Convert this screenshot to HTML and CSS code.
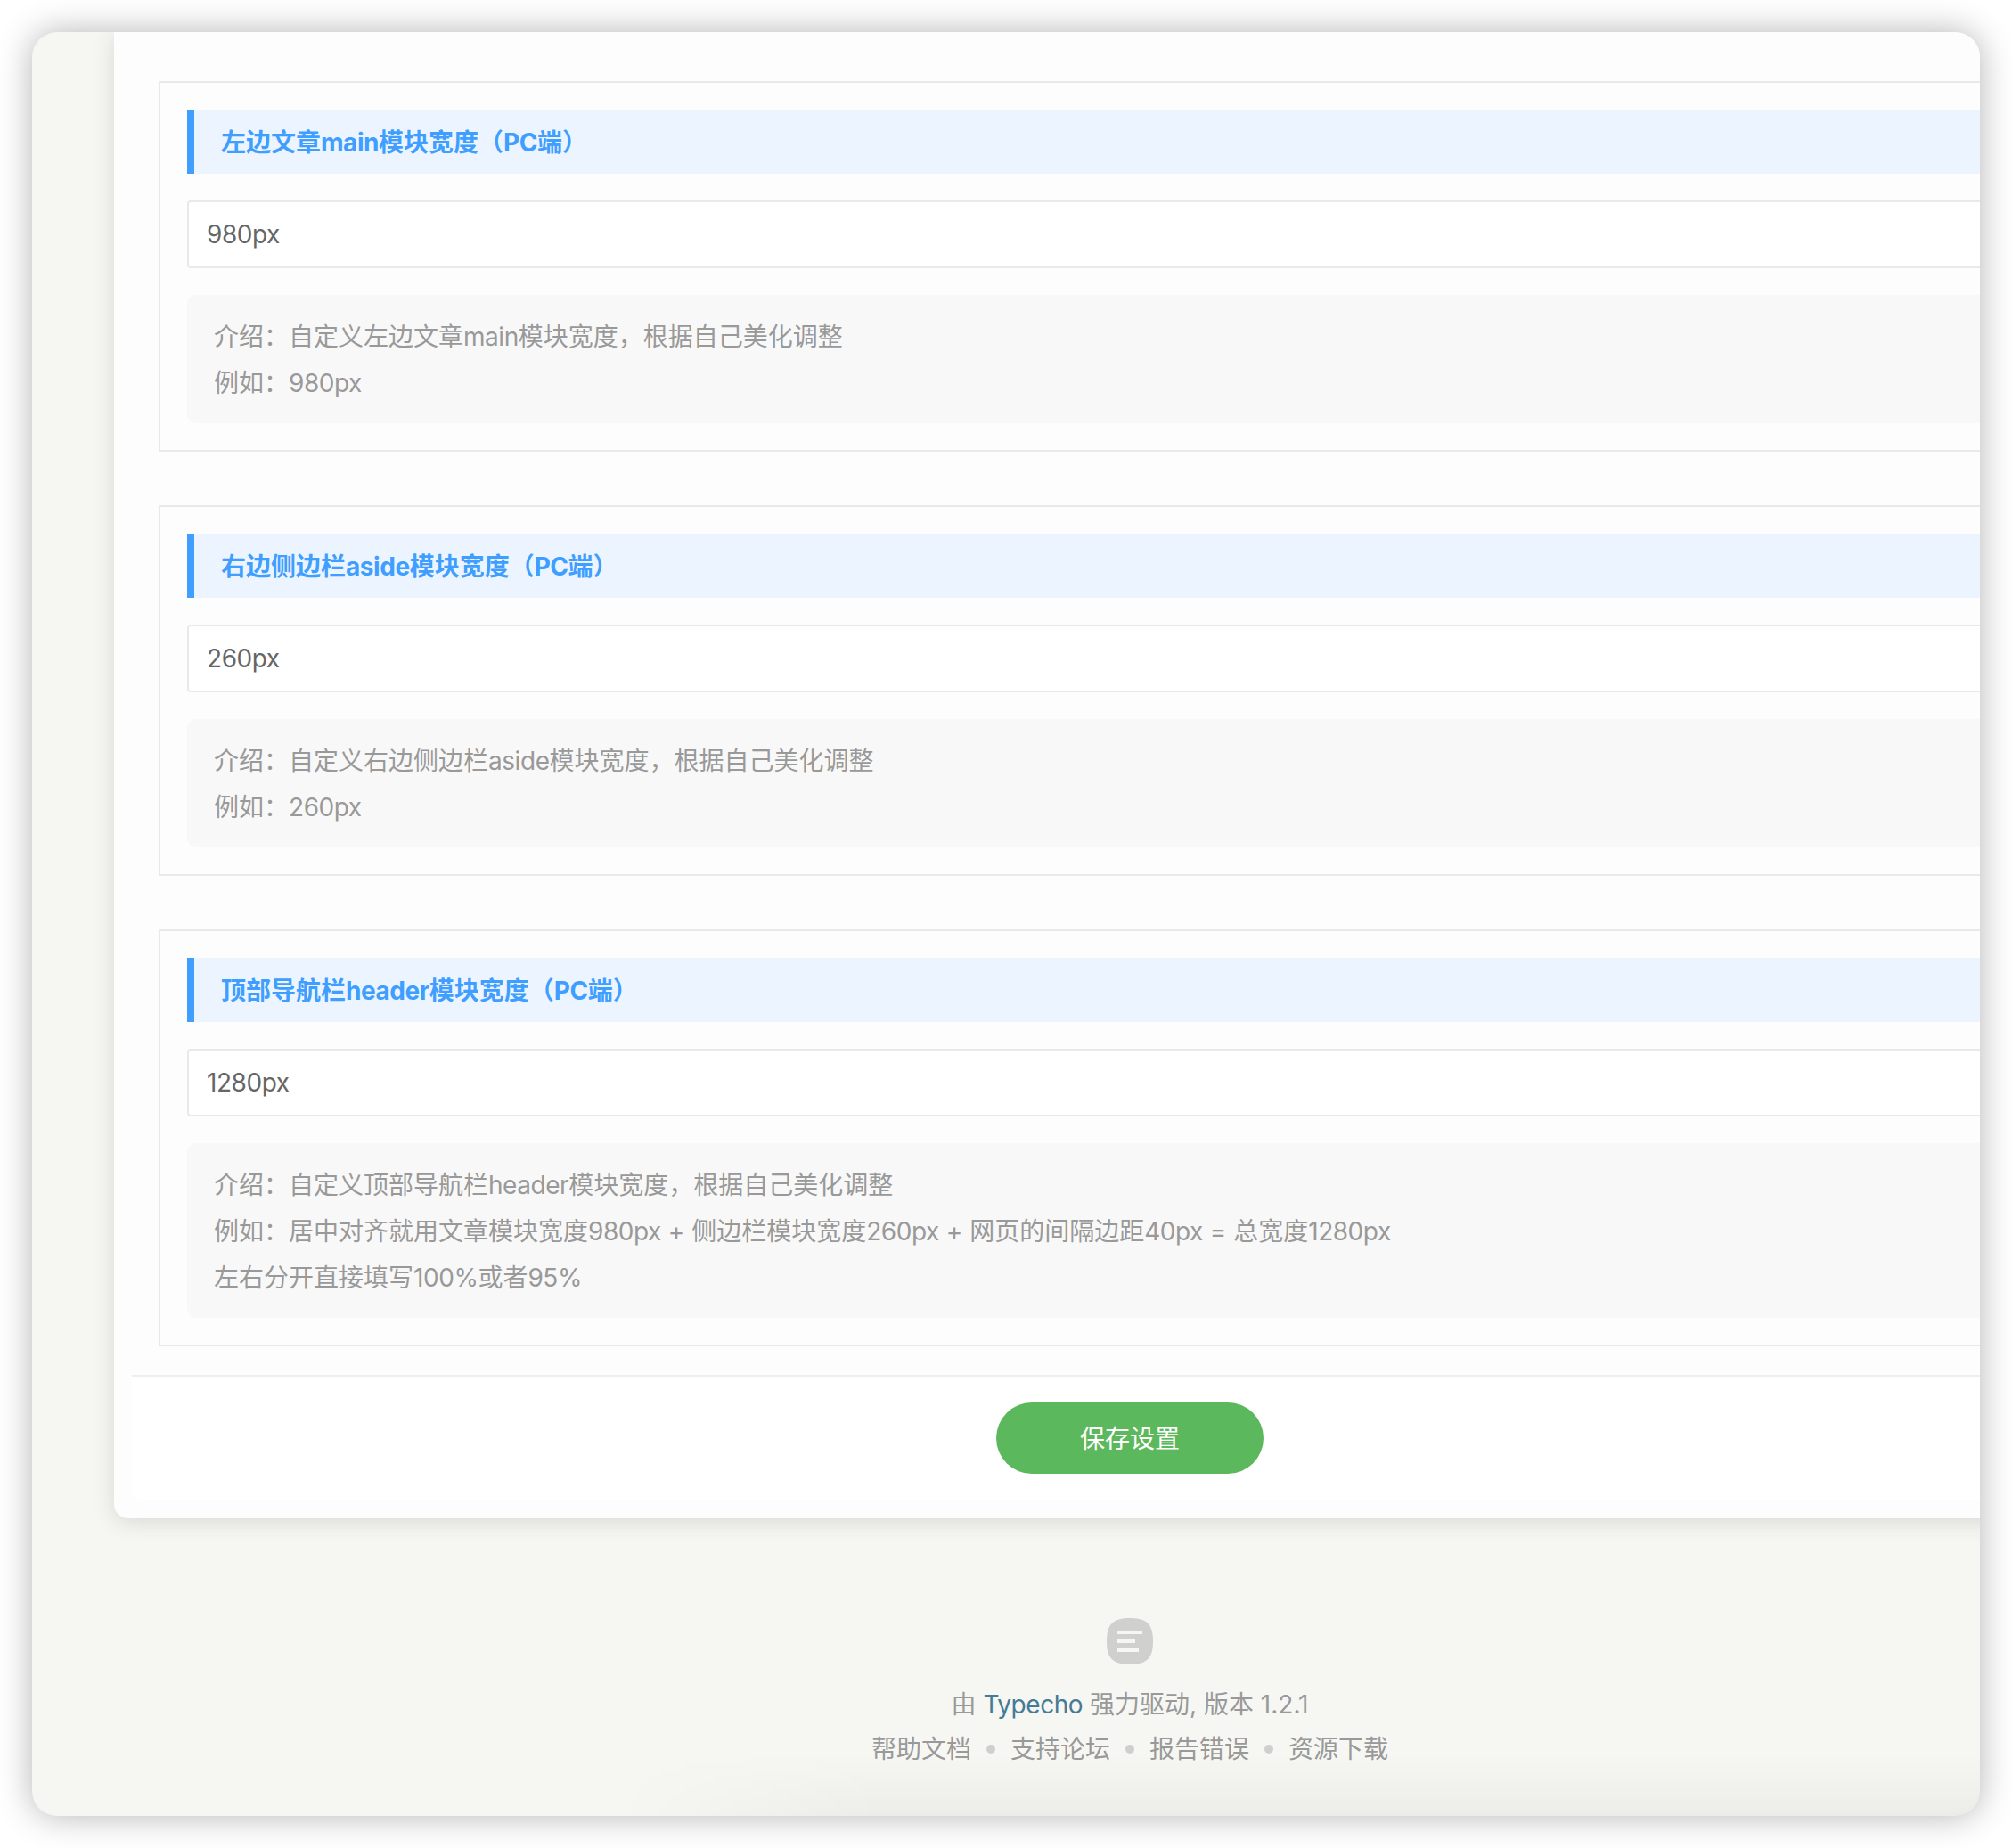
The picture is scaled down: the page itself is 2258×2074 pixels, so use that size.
FILE: index.html
```html
<!DOCTYPE html>
<html lang="zh-CN">
<head>
<meta charset="utf-8">
<title>设置</title>
<link rel="stylesheet" href="styles.css">
</head>
<body>
<div class="window">
  <div class="canvas">
    <form class="card">
      <section class="option">
        <h3 class="option-title">左边文章<span class="en">main</span>模块宽度（<span class="en">PC</span>端）</h3>
        <input class="field" type="text" value="980px">
        <div class="desc">
          <p>介绍：自定义左边文章<span class="en">main</span>模块宽度，根据自己美化调整</p>
          <p>例如：<span class="en">980px</span></p>
        </div>
      </section>
      <section class="option">
        <h3 class="option-title">右边侧边栏<span class="en">aside</span>模块宽度（<span class="en">PC</span>端）</h3>
        <input class="field" type="text" value="260px">
        <div class="desc">
          <p>介绍：自定义右边侧边栏<span class="en">aside</span>模块宽度，根据自己美化调整</p>
          <p>例如：<span class="en">260px</span></p>
        </div>
      </section>
      <section class="option">
        <h3 class="option-title">顶部导航栏<span class="en">header</span>模块宽度（<span class="en">PC</span>端）</h3>
        <input class="field" type="text" value="1280px">
        <div class="desc">
          <p>介绍：自定义顶部导航栏<span class="en">header</span>模块宽度，根据自己美化调整</p>
          <p>例如：居中对齐就用文章模块宽度<span class="en">980px</span> + 侧边栏模块宽度<span class="en">260px</span> + 网页的间隔边距<span class="en">40px</span> = 总宽度<span class="en">1280px</span></p>
          <p>左右分开直接填写<span class="en">100%</span>或者<span class="en">95%</span></p>
        </div>
      </section>
      <div class="actions">
        <button class="save" type="button">保存设置</button>
      </div>
    </form>
    <footer class="foot">
      <svg class="logo" viewBox="0 0 52 52" aria-hidden="true">
        <path class="logo-shape" d="M26 0C45 0 52 7 52 26S45 52 26 52 0 45 0 26 7 0 26 0Z"/>
        <rect class="logo-bar" x="12" y="14" width="28" height="4"/>
        <rect class="logo-bar" x="12" y="24" width="20" height="4"/>
        <rect class="logo-bar" x="12" y="34" width="24" height="4"/>
      </svg>
      <p class="foot-line">由 <a class="brand en" href="#">Typecho</a> 强力驱动, 版本 1.2.1</p>
      <nav class="foot-nav">
        <a href="#">帮助文档</a><span class="dot"></span><a href="#">支持论坛</a><span class="dot"></span><a href="#">报告错误</a><span class="dot"></span><a href="#">资源下载</a>
      </nav>
    </footer>
  </div>
</div>
</body>
</html>
```
FILE: styles.css
```css
* { box-sizing: border-box; }
html, body { margin: 0; padding: 0; background: #fff; }
body {
  padding: 36px;
  height: 2074px;
  overflow: hidden;
  font-family: Inter, "Noto Sans CJK SC", sans-serif;
  font-size: 28px;
}
p { margin: 0; }
.en { letter-spacing: -.45px; }

.window {
  position: relative;
  width: 2186px;
  height: 2002px;
  border-radius: 28px;
  background: #f6f7f3;
  box-shadow: 0 0 38px rgba(0, 0, 0, .3);
  overflow: hidden;
}
.window::after {
  content: "";
  position: absolute;
  left: 30%;
  right: 0;
  bottom: 0;
  height: 70px;
  background: linear-gradient(to bottom, rgba(0, 0, 0, 0), rgba(0, 0, 0, .04));
  -webkit-mask-image: linear-gradient(to right, transparent, #000 300px);
  mask-image: linear-gradient(to right, transparent, #000 300px);
  pointer-events: none;
}
.canvas {
  width: 2464px;
  padding: 0 92px;
}
.card {
  display: block;
  width: 2280px;
  padding: 55px 20px 20px;
  background: #fdfdfd;
  border-radius: 0 0 16px 16px;
  box-shadow: 0 4px 24px rgba(60, 60, 40, .16);
}
.option {
  margin: 0 30px 60px;
  padding: 30px;
  border: 2px solid #e9e9e9;
}
.option:last-of-type { margin-bottom: 32px; }
.option-title {
  margin: 0 0 30px;
  height: 72px;
  padding: 1px 0 0 30px;
  border-left: 8px solid #409eff;
  background: #ecf5ff;
  color: #409eff;
  font-size: 28px;
  font-weight: 700;
  line-height: 72px;
}
.field {
  display: block;
  width: 100%;
  height: 76px;
  margin: 0 0 30px;
  padding: 0 20px;
  border: 2px solid #e9e9e9;
  border-radius: 4px;
  background: #fff;
  color: #666;
  font: inherit;
  letter-spacing: -.45px;
  outline: none;
}
.desc {
  padding: 21px 30px 19px;
  border-radius: 10px;
  background: #f8f8f8;
  color: #999;
  line-height: 52px;
}
.actions {
  display: flex;
  justify-content: center;
  padding: 29px 0 30px;
  border-top: 2px solid #eee;
  border-radius: 0 0 12px 12px;
  background: #fff;
}
.save {
  width: 300px;
  height: 80px;
  padding: 0 0 2px;
  border: 0;
  border-radius: 40px;
  background: #5cb85c;
  color: #fff;
  font: inherit;
}

.foot {
  display: flex;
  flex-direction: column;
  align-items: center;
  padding: 112px 0 50px;
  color: #999;
  line-height: 50px;
}
.logo {
  display: block;
  width: 52px;
  height: 52px;
  margin-bottom: 20px;
}
.logo-shape { fill: #d0d0ce; }
.logo-bar { fill: #f6f7f3; }
.brand { color: #467b96; text-decoration: none; }
.foot-nav {
  display: flex;
  align-items: center;
  gap: 17px;
}
.foot-nav a { color: #999; text-decoration: none; }
.dot {
  width: 10px;
  height: 10px;
  border-radius: 50%;
  background: #cfcfcf;
}
```
